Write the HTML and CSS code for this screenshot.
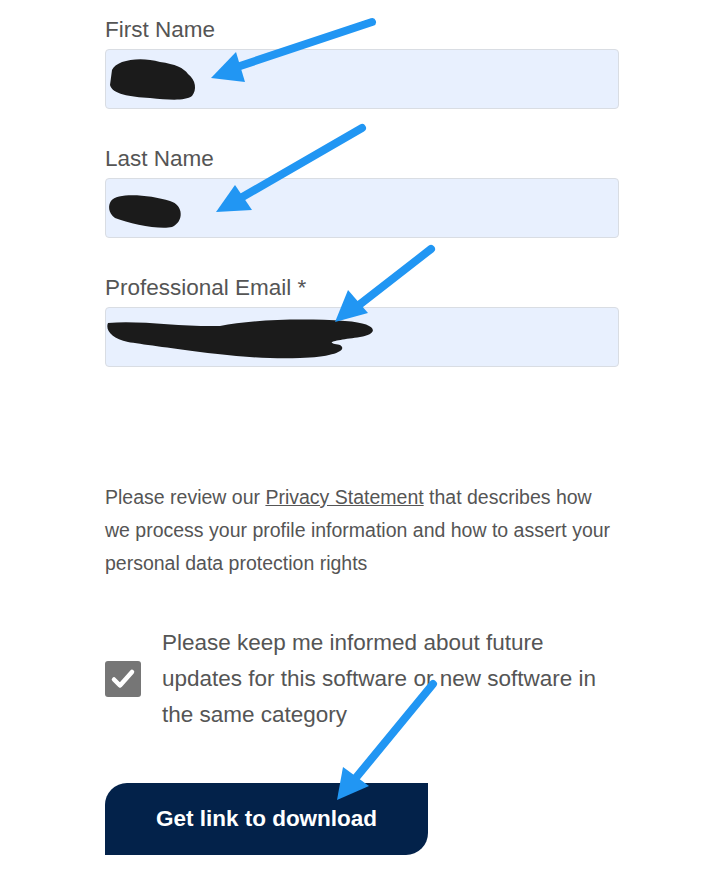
FILE: index.html
```html
<!DOCTYPE html>
<html lang="en">
<head>
<meta charset="utf-8">
<title>Download form</title>
<link rel="stylesheet" href="styles.css">
</head>
<body>
<div class="page">
  <form class="form">
    <div class="field">
      <label class="label">First Name</label>
      <div class="input"></div>
    </div>
    <div class="field">
      <label class="label">Last Name</label>
      <div class="input"></div>
    </div>
    <div class="field">
      <label class="label">Professional Email *</label>
      <div class="input"></div>
    </div>
    <p class="privacy">Please review our <a href="#">Privacy Statement</a> that describes how we process your profile information and how to assert your personal data protection rights</p>
    <div class="consent">
      <span class="checkbox">
        <svg width="36" height="36" viewBox="0 0 36 36"><path d="M9 18.5 L15 24.5 L27 11" fill="none" stroke="#fff" stroke-width="4.5" stroke-linecap="round" stroke-linejoin="round"/></svg>
      </span>
      <span class="consent-text">Please keep me informed about future updates for this software or new software in the same category</span>
    </div>
    <button type="button" class="btn">Get link to download</button>
  </form>
  <svg class="overlay" width="720" height="876" viewBox="0 0 720 876">
    <g fill="#1b1b1b">
      <path d="M112 70 C116 60 140 56 160 62 C175 64 184 68 188 74 C196 80 197 90 192 96 C185 101 170 100 150 98 C130 97 112 94 110 85 Z"/>
      <path d="M111 201 C118 192 150 195 170 201 C184 205 184 222 172 227 C160 230 130 224 115 218 C108 213 108 205 111 201 Z"/>
      <path d="M108 323 C140 320 180 327 220 326 C250 320 300 318 345 321 C378 323 380 334 360 337 C340 340 320 342 340 345 C348 350 335 357 300 358 C270 359 240 357 200 352 C170 348 140 344 128 342 C112 339 105 330 108 323 Z"/>
    </g>
    <g stroke="#2196f3" stroke-width="8" stroke-linecap="round" fill="none">
      <line x1="372" y1="22" x2="228" y2="70"/>
      <line x1="362" y1="128" x2="232" y2="203"/>
      <line x1="431" y1="249" x2="350" y2="312"/>
      <line x1="433" y1="684" x2="350" y2="785"/>
    </g>
    <g fill="#2196f3">
      <polygon points="211,78 236,52 245,82"/>
      <polygon points="216,212 235,185 252,210"/>
      <polygon points="335,322 348,290 368,313"/>
      <polygon points="337,800 343,767 369,786"/>
    </g>
  </svg>
</div>
</body>
</html>
```
FILE: styles.css
```css
* { box-sizing: border-box; }
html, body { margin: 0; padding: 0; background: #fff; }
body { font-family: Arial, "Liberation Sans", sans-serif; color: #555; }
.page { position: relative; width: 720px; height: 876px; overflow: hidden; }
.form { display: flex; flex-direction: column; padding: 15px 0 0 105px; width: 640px; }
.field { display: flex; flex-direction: column; margin-bottom: 35px; }
.label { font-size: 22.5px; line-height: 30px; color: #555; margin-bottom: 4px; }
.input { height: 60px; background: #e8f0fe; border: 1px solid #d9dde3; border-radius: 4px; width: 514px; }
.privacy { margin: 79px 0 0 0; font-size: 19.5px; line-height: 33px; color: #555; width: 514px; }
.privacy a { color: #555; text-decoration: underline; }
.consent { display: flex; align-items: center; gap: 21px; margin-top: 45px; }
.checkbox { width: 36px; height: 36px; flex: none; background: #767676; border-radius: 3px; display: flex; }
.consent-text { font-size: 22.5px; line-height: 36px; color: #555; width: 450px; }
.btn { margin-top: 50px; width: 323px; height: 72px; border: none; background: #03224a; color: #fff; font-family: Arial, "Liberation Sans", sans-serif; font-weight: bold; font-size: 22.5px; border-radius: 22px 0 22px 0; padding: 0; cursor: pointer; }
.overlay { position: absolute; left: 0; top: 0; pointer-events: none; }
```
